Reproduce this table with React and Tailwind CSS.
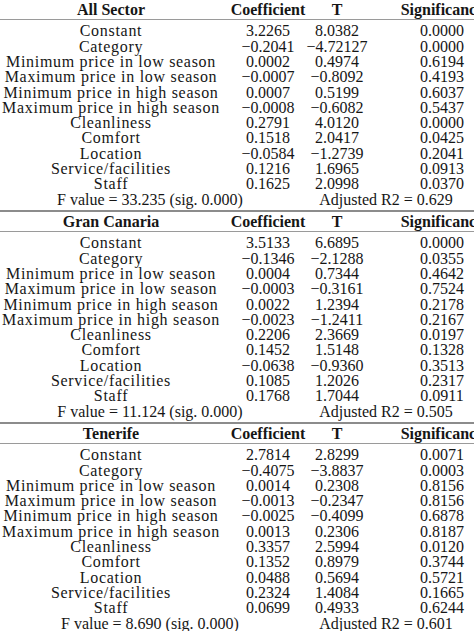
import React from "react";

const labels = [
  "Constant",
  "Category",
  "Minimum price in low season",
  "Maximum price in low season",
  "Minimum price in high season",
  "Maximum price in high season",
  "Cleanliness",
  "Comfort",
  "Location",
  "Service/facilities",
  "Staff",
];

const sections = [
  {
    title: "All Sector",
    rows: [
      ["3.2265", "8.0382", "0.0000"],
      ["\u22120.2041", "\u22124.72127", "0.0000"],
      ["0.0002", "0.4974", "0.6194"],
      ["\u22120.0007", "\u22120.8092", "0.4193"],
      ["0.0007", "0.5199", "0.6037"],
      ["\u22120.0008", "\u22120.6082", "0.5437"],
      ["0.2791", "4.0120", "0.0000"],
      ["0.1518", "2.0417", "0.0425"],
      ["\u22120.0584", "\u22121.2739", "0.2041"],
      ["0.1216", "1.6965", "0.0913"],
      ["0.1625", "2.0998", "0.0370"],
    ],
    f: "F value = 33.235 (sig. 0.000)",
    r2: "Adjusted R2 = 0.629",
  },
  {
    title: "Gran Canaria",
    rows: [
      ["3.5133", "6.6895", "0.0000"],
      ["\u22120.1346", "\u22122.1288", "0.0355"],
      ["0.0004", "0.7344", "0.4642"],
      ["\u22120.0003", "\u22120.3161", "0.7524"],
      ["0.0022", "1.2394", "0.2178"],
      ["\u22120.0023", "\u22121.2411", "0.2167"],
      ["0.2206", "2.3669", "0.0197"],
      ["0.1452", "1.5148", "0.1328"],
      ["\u22120.0638", "\u22120.9360", "0.3513"],
      ["0.1085", "1.2026", "0.2317"],
      ["0.1768", "1.7044", "0.0911"],
    ],
    f: "F value = 11.124 (sig. 0.000)",
    r2: "Adjusted R2 = 0.505",
  },
  {
    title: "Tenerife",
    rows: [
      ["2.7814", "2.8299", "0.0071"],
      ["\u22120.4075", "\u22123.8837", "0.0003"],
      ["0.0014", "0.2308", "0.8156"],
      ["\u22120.0013", "\u22120.2347", "0.8156"],
      ["\u22120.0025", "\u22120.4099", "0.6878"],
      ["0.0013", "0.2306", "0.8187"],
      ["0.3357", "2.5994", "0.0120"],
      ["0.1352", "0.8979", "0.3744"],
      ["0.0488", "0.5694", "0.5721"],
      ["0.2324", "1.4084", "0.1665"],
      ["0.0699", "0.4933", "0.6244"],
    ],
    f: "F value = 8.690 (sig. 0.000)",
    r2: "Adjusted R2 = 0.601",
  },
];

// label | coefficient | T | significance (last one runs past the right edge)
const cols = "grid grid-cols-[222px_92px_46px_164px]";
const cell = "flex justify-center whitespace-nowrap";

const Section = ({ s, first }) => (
  <div className={"border-t-2 border-[#8c8c8c] " + (first ? "-mt-[2px]" : "")}>
    {/* header */}
    <div className={cols + " h-[20px] leading-[20px] font-bold border-b border-[#9a9a9a]"}>
      <div className={cell}>{s.title}</div>
      <div className={cell}>Coefficient</div>
      <div className={cell}>T</div>
      <div className={cell}>Significance</div>
    </div>

    <div className="pt-[3.4px] pb-[3px]">
      {s.rows.map((r, i) => (
        <div key={i} className={cols + " h-[15.3px] leading-[15.3px]"}>
          <div className={cell + " tracking-[0.7px]"}>{labels[i]}</div>
          <div className={cell}>{r[0]}</div>
          <div className={cell}>{r[1]}</div>
          <div className={cell}>{r[2]}</div>
        </div>
      ))}
      {/* summary */}
      <div className="grid grid-cols-[300px_172px] h-[15.3px] leading-[15.3px]">
        <div className={cell}>{s.f}</div>
        <div className={cell}>{s.r2}</div>
      </div>
    </div>
  </div>
);

export default function App() {
  return (
    <div
      className="w-[474px] h-[631px] overflow-hidden bg-white text-[#161616] text-[16px]"
      style={{ fontFamily: '"Liberation Serif", "Times New Roman", serif' }}
    >
      <div className="w-[524px]">
        {sections.map((s, i) => (
          <Section key={s.title} s={s} first={i === 0} />
        ))}
      </div>
    </div>
  );
}
